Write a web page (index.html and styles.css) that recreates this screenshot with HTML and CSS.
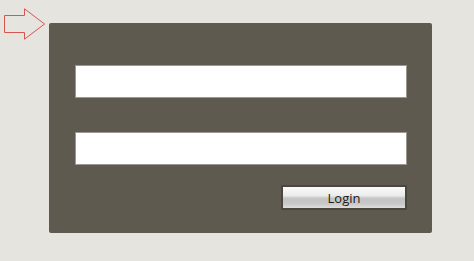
FILE: index.html
```html
<!DOCTYPE html>
<html>
<head>
<meta charset="utf-8">
<link rel="stylesheet" href="styles.css">
</head>
<body>
<div class="stage">
  <svg class="arrow" width="42" height="34" viewBox="0 0 42 34">
    <polygon points="0.5,7.5 20.5,7.5 20.5,0.8 40.5,16 20.5,31.2 20.5,24.5 0.5,24.5" fill="none" stroke="#d9534f" stroke-width="1"/>
  </svg>
  <div class="panel">
    <input class="field" type="text">
    <input class="field second" type="password">
    <div class="actions">
      <button class="login">Login</button>
    </div>
  </div>
</div>
</body>
</html>
```
FILE: styles.css
```css
html, body {
  margin: 0;
  padding: 0;
  background: #e6e4df;
  width: 474px;
  height: 261px;
  overflow: hidden;
}
.stage {
  position: relative;
  padding: 23px 0 0 49px;
}
.arrow {
  position: absolute;
  left: 4px;
  top: 8px;
}
.panel {
  box-sizing: border-box;
  width: 383px;
  height: 210px;
  background: #5e5a4f;
  border-radius: 2px;
  padding: 42px 25px 0 26px;
  display: flex;
  flex-direction: column;
}
.field {
  box-sizing: border-box;
  display: block;
  width: 332px;
  height: 33px;
  margin: 0;
  border: 1px solid #9c9890;
  background: #ffffff;
  outline: none;
}
.second {
  margin-top: 34px;
  height: 33px;
}
.actions {
  display: flex;
  justify-content: flex-end;
  margin-top: 20px;
}
.login {
  box-sizing: border-box;
  width: 126px;
  height: 25px;
  margin: 0;
  padding: 0;
  border: 2px solid #4a4740;
  border-radius: 1px;
  background: linear-gradient(to bottom, #fbfbfb 0%, #ececec 40%, #c4c4c4 55%, #c8c8c8 80%, #dedede 100%);
  font-family: "Open Sans", "Liberation Sans", sans-serif;
  font-size: 13px;
  color: #1a1a1a;
  line-height: 20px;
  text-align: center;
}
```
